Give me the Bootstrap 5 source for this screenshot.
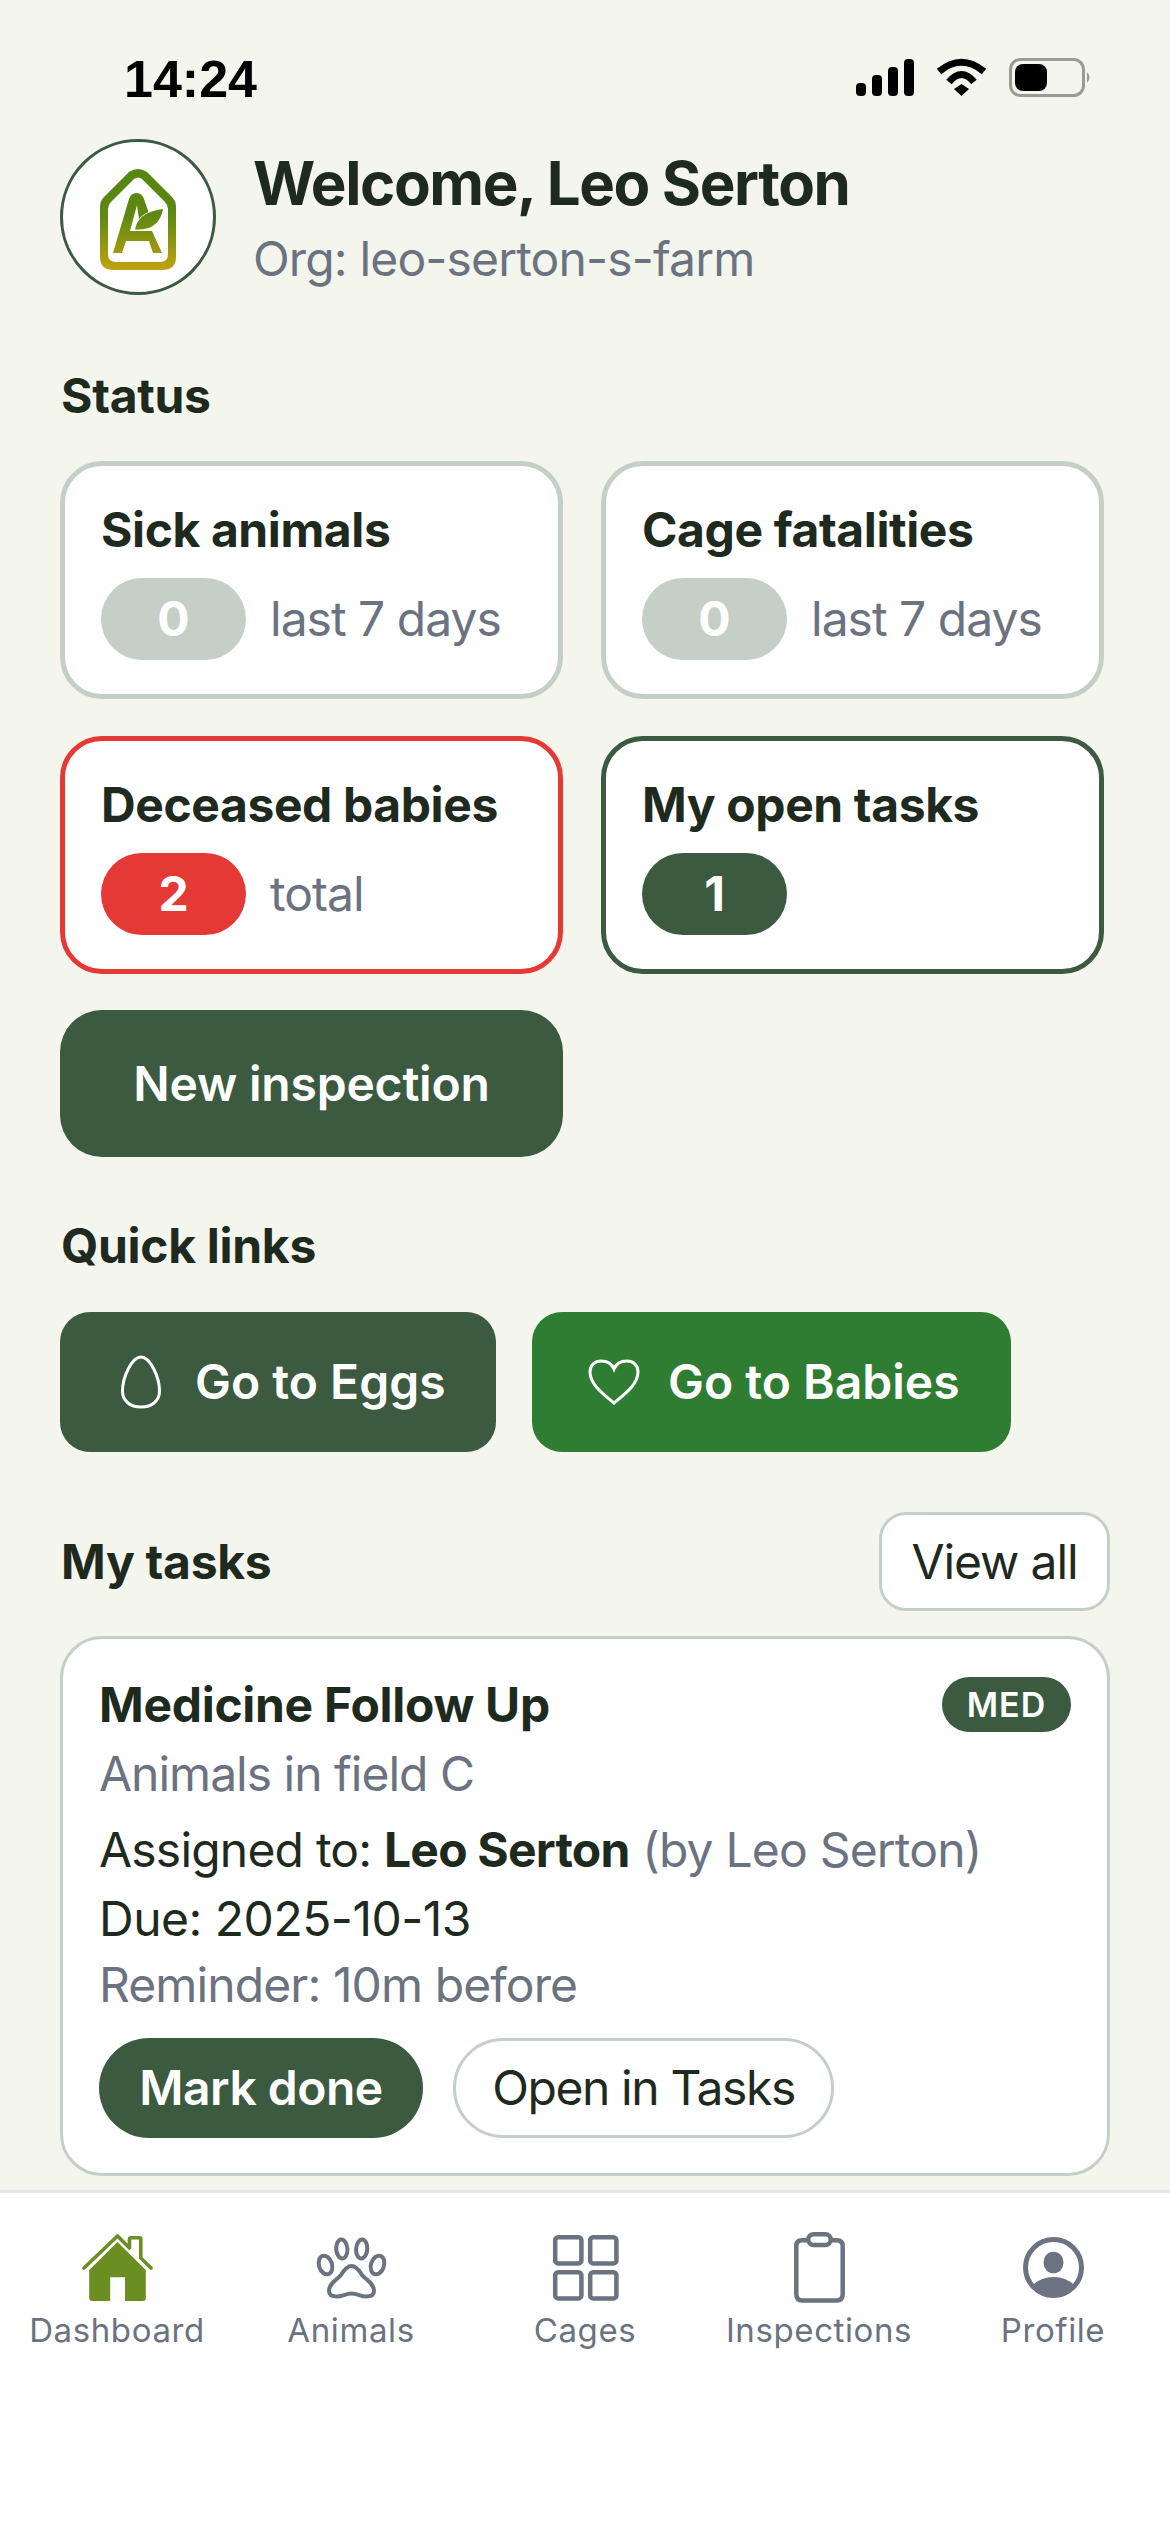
<!DOCTYPE html>
<html lang="en">
<head>
    <meta charset="UTF-8" />
    <title>Dashboard</title>
    <meta name="viewport" content="width=device-width, initial-scale=1" />
    <link href="https://cdn.jsdelivr.net/npm/bootstrap@5.3.3/dist/css/bootstrap.min.css" rel="stylesheet" />
    <style>
        html, body { height: 100%; }
        body { background: #f4f6ee; font-family: Inter, "Liberation Sans", sans-serif; color: #1f2a1f; }
        .phone { width: 1170px; height: 2532px; display: flex; flex-direction: column; overflow: hidden; }

        .status-row { height: 139px; padding: 50px 79px 0 124px; flex: none; }
        .clock { font-family: "Liberation Sans", sans-serif; font-weight: 700; font-size: 52px; line-height: 58px; color: #000; }

        .page { flex: 1; padding: 0 60px; min-height: 0; }
        .avatar { width: 156px; height: 156px; border: 3px solid #3b5a40; border-radius: 50%; background: #fff; flex: none; margin-right: 37px; }
        .avatar svg { margin-top: 6px; }
        .hello { font-size: 60px; line-height: 68px; font-weight: 700; letter-spacing: -1.4px; margin: 0; }
        .org { font-size: 48px; line-height: 60px; color: #6b7280; letter-spacing: -.85px; margin-top: 12px; }
        .sect { font-size: 48px; line-height: 58px; font-weight: 700; letter-spacing: -.3px; margin: 0 0 0 1px; }
        .status-head { margin: 72px 0 36px 1px; }
        .quick-head { margin: 60px 0 37px 1px; }

        .stat-grid { display: grid; grid-template-columns: 503px 503px; gap: 37px 38px; }
        .stat { background: #fff; border: 5px solid #c5cfc7; border-radius: 42px; height: 238px; padding: 35px 36px 0; }
        .stat.bad { border-color: #e53935; }
        .stat.mine { border-color: #3b5a40; }
        .stat-name { font-size: 48px; line-height: 58px; font-weight: 700; letter-spacing: -.4px; }
        .stat-line { margin-top: 19px; }
        .pill-count { width: 145px; height: 82px; border-radius: 41px; background: #c5cfc7; color: #fff; font-size: 48px; font-weight: 700; }
        .stat.bad .pill-count { background: #e53935; }
        .stat.mine .pill-count { background: #3b5a40; }
        .stat-note { font-size: 48px; color: #6b7280; letter-spacing: -1px; }

        .btn.new-insp { width: 503px; height: 147px; margin-top: 36px; border-radius: 42px; background: #3b5a40; border: 0; color: #fff; font-size: 48px; font-weight: 600; letter-spacing: -.2px; }
        .quick-row { gap: 36px; }
        .btn.go { height: 140px; border-radius: 30px; color: #fff; font-size: 48px; font-weight: 600; border: 0; padding: 0; }
        .btn.go-eggs { width: 436px; background: #3b5a40; padding-left: 60px; }
        .btn.go-babies { width: 479px; background: #2e7d32; padding-left: 56px; }
        .go svg { margin-right: 33px; }
        .go-babies svg { margin-right: 28px; }
        .tasks-head { margin: 60px 0 25px; }
        .btn.view-all { width: 231px; height: 99px; border: 3px solid #c5cfc7; border-radius: 27px; background: #fff; color: #1f2a1f; font-size: 48px; letter-spacing: -1.1px; padding: 0; }

        .task { background: #fff; border: 3px solid #c5cfc7; border-radius: 42px; width: 1050px; height: 540px; padding: 38px 36px 0; }
        .task-name { font-size: 48px; line-height: 55px; font-weight: 700; letter-spacing: -.3px; }
        .prio { background: #3b5a40; color: #fff; font-size: 34px; font-weight: 600; letter-spacing: 1px; height: 55px; width: 129px; border-radius: 28px; }
        .task-line { font-size: 48px; line-height: 60px; letter-spacing: -1px; }
        .line-sub { margin-top: 12px; }
        .line-assign { margin-top: 16px; letter-spacing: -.8px; }
        .line-due { margin-top: 9px; letter-spacing: -.5px; }
        .line-remind { margin-top: 6px; letter-spacing: -.9px; }
        .muted-txt { color: #6b7280; }
        .task-actions { gap: 30px; margin-top: 23px; }
        .btn.done { height: 100px; width: 324px; border-radius: 50px; background: #3b5a40; color: #fff; border: 0; font-size: 48px; font-weight: 600; letter-spacing: -.5px; padding: 0; }
        .btn.open-t { height: 100px; width: 381px; border-radius: 50px; background: #fff; color: #1f2a1f; border: 3px solid #c5cfc7; font-size: 48px; letter-spacing: -1.4px; padding: 0; }

        .tabs { height: 342px; flex: none; background: #fff; border-top: 3px solid #e6e6ec; padding-top: 38px; }
        .tab-item { width: 234px; color: #6b7280; font-size: 33px; line-height: 40px; letter-spacing: .6px; text-align: center; }
        .tab-ico { display: block; margin: 0 auto 7px; }
    </style>
</head>
<body>
<div class="phone">
    <!-- fake iOS status bar -->
    <div class="status-row d-flex justify-content-between align-items-start">
        <span class="clock">14:24</span>
        <svg width="235" height="40" viewBox="0 0 235 40" class="mt-2">
            <g fill="#000">
                <rect x="0" y="25" width="10" height="13" rx="4"/>
                <rect x="16" y="17" width="10" height="21" rx="4"/>
                <rect x="32" y="9" width="10" height="29" rx="4"/>
                <rect x="48" y="1" width="10" height="37" rx="4"/>
            </g>
            <g fill="none" stroke="#000" stroke-width="7">
                <path d="M83 13.500 Q105.500 -5 128 13.500"/>
                <path d="M93 24 Q105.500 9 118 24"/>
            </g>
            <path d="M98 31 L105.500 26 L113 31 L105.500 38 Z" fill="#000"/>
            <rect x="154.500" y="1.500" width="73" height="36" rx="10" fill="none" stroke="#999b94" stroke-width="3"/>
            <rect x="159" y="6" width="32" height="27" rx="8" fill="#000"/>
            <path d="M231 14 Q236 19.500 231 25 Z" fill="#999b94"/>
        </svg>
    </div>

    <div class="page">
        <div class="d-flex align-items-center">
            <div class="avatar d-flex align-items-center justify-content-center">
                <svg width="76" height="102" viewBox="0 0 76 102">
                    <defs>
                        <linearGradient id="logoGrad" x1="0" y1="0" x2="0" y2="102" gradientUnits="userSpaceOnUse">
                            <stop offset="0" stop-color="#55860f"/>
                            <stop offset=".45" stop-color="#5d8812"/>
                            <stop offset="1" stop-color="#c3a30e"/>
                        </linearGradient>
                    </defs>
                    <path fill-rule="evenodd" fill="url(#logoGrad)" d="M29 3 Q38 -3 47 3 L72 28 Q76 32 76 38 L76 88 Q76 101 62 101 L14 101 Q0 101 0 88 L0 38 Q0 32 4 28 Z M34 10 L11 33 Q8 36 8 40 L8 85 Q8 93 16 93 L60 93 Q68 93 68 85 L68 40 Q68 36 65 33 L42 10 Q38 7 34 10 Z"/>
                    <path fill="url(#logoGrad)" d="M13 84 L29 30 Q31 24 36.500 24 Q42 24 44 30 L48.500 43 Q42 46 39 50 L37 36 L30 62 L52 62 L62 84 L53 84 L49 72 L26 72 L22 84 Z"/>
                    <path fill="url(#logoGrad)" d="M35 60.500 Q38 43 63 40 Q59 62 35 60.500 Z"/>
                </svg>
            </div>
            <div class="mt-1">
                <h1 class="hello">Welcome, Leo Serton</h1>
                <div class="org">Org: leo-serton-s-farm</div>
            </div>
        </div>

        <h2 class="sect status-head">Status</h2>
        <div class="stat-grid">
            <div class="stat">
                <div class="stat-name">Sick animals</div>
                <div class="d-flex align-items-center gap-4 stat-line">
                    <span class="pill-count d-flex align-items-center justify-content-center">0</span>
                    <span class="stat-note">last 7 days</span>
                </div>
            </div>
            <div class="stat">
                <div class="stat-name">Cage fatalities</div>
                <div class="d-flex align-items-center gap-4 stat-line">
                    <span class="pill-count d-flex align-items-center justify-content-center">0</span>
                    <span class="stat-note">last 7 days</span>
                </div>
            </div>
            <div class="stat bad">
                <div class="stat-name">Deceased babies</div>
                <div class="d-flex align-items-center gap-4 stat-line">
                    <span class="pill-count d-flex align-items-center justify-content-center">2</span>
                    <span class="stat-note">total</span>
                </div>
            </div>
            <div class="stat mine">
                <div class="stat-name">My open tasks</div>
                <div class="d-flex align-items-center gap-4 stat-line">
                    <span class="pill-count d-flex align-items-center justify-content-center">1</span>
                </div>
            </div>
        </div>

        <button class="btn new-insp d-block" type="button">New inspection</button>

        <h2 class="sect quick-head">Quick links</h2>
        <div class="d-flex quick-row">
            <button class="btn go go-eggs d-flex align-items-center" type="button">
                <svg width="42" height="54" viewBox="0 0 42 54"><path d="M21 2 C30 2 39.500 22 39.500 36 C39.500 46 32 52 21 52 C10 52 2.500 46 2.500 36 C2.500 22 12 2 21 2 Z" fill="none" stroke="#fff" stroke-width="3"/></svg>
                Go to Eggs
            </button>
            <button class="btn go go-babies d-flex align-items-center" type="button">
                <svg width="52" height="46" viewBox="0 0 52 46"><path d="M26 44 C14 34 2 25 2 13 C2 6 7 2 13 2 C19 2 24 5 26 10 C28 5 33 2 39 2 C45 2 50 6 50 13 C50 25 38 34 26 44 Z" fill="none" stroke="#fff" stroke-width="3"/></svg>
                Go to Babies
            </button>
        </div>

        <div class="d-flex justify-content-between align-items-center tasks-head">
            <h2 class="sect">My tasks</h2>
            <button class="btn view-all" type="button">View all</button>
        </div>

        <div class="task">
            <div class="d-flex justify-content-between align-items-center">
                <span class="task-name">Medicine Follow Up</span>
                <span class="prio d-flex align-items-center justify-content-center">MED</span>
            </div>
            <div class="task-line muted-txt line-sub">Animals in field C</div>
            <div class="task-line line-assign">Assigned to: <strong class="fw-bold">Leo Serton</strong> <span class="muted-txt">(by Leo Serton)</span></div>
            <div class="task-line line-due">Due: 2025-10-13</div>
            <div class="task-line muted-txt line-remind">Reminder: 10m before</div>
            <div class="d-flex task-actions">
                <button class="btn done" type="button">Mark done</button>
                <button class="btn open-t" type="button">Open in Tasks</button>
            </div>
        </div>
    </div>

    <nav class="tabs d-flex justify-content-center">
        <div class="tab-item">
            <svg class="tab-ico" width="72" height="72" viewBox="0 0 72 72">
                <path d="M3 37 L36.500 5 L48.500 17 L48.500 8 Q48.500 6.700 50 6.700 L58 6.700 Q59.800 6.700 59.800 8 L59.800 27 L70 37" fill="none" stroke="#6b8e23" stroke-width="3.600" stroke-linecap="round" stroke-linejoin="round"/>
                <path d="M8.200 39 L36.500 11 L64.800 39 L64.800 67 Q64.800 70 61.800 70 L44 70 L44 46.300 L29.200 46.300 L29.200 70 L11.200 70 Q8.200 70 8.200 67 Z" fill="#6b8e23"/>
            </svg>
            Dashboard
        </div>
        <div class="tab-item">
            <svg class="tab-ico" width="72" height="72" viewBox="0 0 72 72" fill="none" stroke="#6b7280" stroke-width="4">
                <ellipse cx="10.500" cy="34" rx="6.500" ry="9.500" transform="rotate(-18 10.500 34)"/>
                <ellipse cx="26.800" cy="18" rx="5.600" ry="9.500" transform="rotate(-4 26.800 18)"/>
                <ellipse cx="46.700" cy="18" rx="5.600" ry="9.500" transform="rotate(4 46.700 18)"/>
                <ellipse cx="62.500" cy="34" rx="6.500" ry="9.500" transform="rotate(18 62.500 34)"/>
                <path d="M36.500 35 C32 35 29 39 26 44 C22 49 14 52 14 60 C14 65 18 65.500 22 65.500 C27 65.500 31 62.500 36.500 62.500 C42 62.500 46 65.500 51 65.500 C55 65.500 59 65 59 60 C59 52 51 49 47 44 C44 39 41 35 36.500 35 Z"/>
            </svg>
            Animals
        </div>
        <div class="tab-item">
            <svg class="tab-ico" width="72" height="72" viewBox="0 0 72 72" fill="none" stroke="#6b7280" stroke-width="4.500">
                <rect x="6.200" y="6.200" width="26.200" height="26.200" rx="3"/>
                <rect x="41.200" y="6.200" width="26.200" height="26.200" rx="3"/>
                <rect x="6.200" y="41.200" width="26.200" height="26.200" rx="3"/>
                <rect x="41.200" y="41.200" width="26.200" height="26.200" rx="3"/>
            </svg>
            Cages
        </div>
        <div class="tab-item">
            <svg class="tab-ico" width="72" height="72" viewBox="0 0 72 72" fill="none" stroke="#6b7280" stroke-width="4.500">
                <path d="M24 9.200 L19 9.200 Q13.300 9.200 13.300 15 L13.300 63 Q13.300 69.500 19.500 69.500 L53.500 69.500 Q59.700 69.500 59.700 63 L59.700 15 Q59.700 9.200 54 9.200 L49 9.200"/>
                <rect x="25.200" y="3.200" width="22.600" height="10.800" rx="5.400"/>
            </svg>
            Inspections
        </div>
        <div class="tab-item">
            <svg class="tab-ico" width="72" height="72" viewBox="0 0 72 72">
                <circle cx="36.500" cy="36.500" r="28" fill="none" stroke="#6b7280" stroke-width="5"/>
                <ellipse cx="36.500" cy="31.500" rx="10" ry="10.800" fill="#6b7280"/>
                <path d="M16 54 Q24 46 36.500 46 Q49 46 57 54 A28 28 0 0 1 16 54 Z" fill="#6b7280"/>
            </svg>
            Profile
        </div>
    </nav>
</div>
</body>
</html>
